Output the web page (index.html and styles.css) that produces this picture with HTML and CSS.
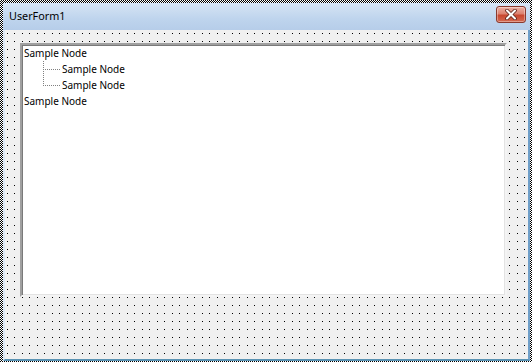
FILE: index.html
```html
<!DOCTYPE html>
<html>
<head>
<meta charset="utf-8">
<link rel="stylesheet" href="styles.css">
</head>
<body>
<div class="selection">
  <div class="window">
    <div class="titlebar">
      <span class="title">UserForm1</span>
      <div class="close">
        <svg width="14" height="11" viewBox="0 0 14 11">
          <path d="M3 1.5 L11 9.5 M11 1.5 L3 9.5" stroke="#5b2118" stroke-width="3.6" stroke-linecap="round"/>
          <path d="M3 1.5 L11 9.5 M11 1.5 L3 9.5" stroke="#ffffff" stroke-width="2" stroke-linecap="round"/>
        </svg>
      </div>
    </div>
    <div class="client">
      <div class="tree">
        <ul class="tree-list">
          <li class="node">
            <div class="row">Sample Node</div>
            <ul class="children">
              <li class="row child"><span class="branch"></span><span>Sample Node</span></li>
              <li class="row child last"><span class="branch"></span><span>Sample Node</span></li>
            </ul>
          </li>
          <li class="node"><div class="row">Sample Node</div></li>
        </ul>
      </div>
    </div>
  </div>
</div>
</body>
</html>
```
FILE: styles.css
```css
html, body {
  margin: 0;
  padding: 0;
}
body {
  width: 532px;
  height: 362px;
  overflow: hidden;
  background: #fff;
  font-family: "Noto Sans", "Open Sans", sans-serif;
  color: #000;
}
.selection {
  box-sizing: border-box;
  width: 532px;
  height: 362px;
  padding: 3px 2px 1px 3px;
  display: flex;
  background: repeating-conic-gradient(#000 0 25%, #fff 0 50%) 0 0 / 2px 2px;
}
.window {
  flex: 1;
  display: flex;
  flex-direction: column;
}
.titlebar {
  box-sizing: border-box;
  height: 27px;
  display: flex;
  align-items: center;
  justify-content: space-between;
  padding: 0 4px 2px 6px;
  background: linear-gradient(#d6e4f4, #bed4ed 60%, #b6cde9);
}
.title {
  font-size: 10.8px;
  color: #000;
}
.close {
  box-sizing: border-box;
  align-self: flex-start;
  margin-top: 3px;
  width: 30px;
  height: 17px;
  border: 1px solid #8a3a2e;
  border-radius: 3px;
  display: flex;
  align-items: center;
  justify-content: center;
  background: linear-gradient(#eab0a4 0%, #dd8270 45%, #c8472f 55%, #d46a52 100%);
  box-shadow: inset 0 0 0 1px rgba(255, 255, 255, 0.35);
}
.client {
  flex: 1;
  display: flex;
  padding: 13px 21px 62px 15px;
  border-left: 2px solid #dbe7f5;
  border-right: 2px solid #6f9fc9;
  border-bottom: 2px solid #5a93b3;
  background-color: #f0f0f0;
  background-image:
    conic-gradient(from 270deg at 1px 1px, #000 90deg, transparent 0),
    conic-gradient(from 270deg at 1px 1px, #000 90deg, transparent 0);
  background-size: 15px 8px, 15px 8px;
  background-position: 2px 3px, 9px 3px;
}
.tree {
  flex: 1;
  background: #fff;
  border: 2px solid;
  border-color: #a0a0a0 #f4f4f4 #f4f4f4 #a0a0a0;
  box-shadow: inset 1px 1px 0 #7a7a7a, inset -1px -1px 0 #e3e3e3;
  font-size: 10px;
}
.tree-list, .children {
  list-style: none;
  margin: 0;
  padding: 0;
}
.row {
  height: 16px;
  display: flex;
  align-items: center;
  padding-left: 2px;
  white-space: nowrap;
}
.children {
  margin-left: 21px;
}
.child {
  padding-left: 0;
}
.branch {
  width: 19px;
  align-self: stretch;
  flex: none;
  background:
    repeating-linear-gradient(to bottom, #808080 0 1px, transparent 1px 2px) left top / 1px 100% no-repeat,
    repeating-linear-gradient(to right, #808080 0 1px, transparent 1px 2px) left 8px / 18px 1px no-repeat;
}
.last .branch {
  background:
    repeating-linear-gradient(to bottom, #808080 0 1px, transparent 1px 2px) left top / 1px 9px no-repeat,
    repeating-linear-gradient(to right, #808080 0 1px, transparent 1px 2px) left 8px / 18px 1px no-repeat;
}
```
